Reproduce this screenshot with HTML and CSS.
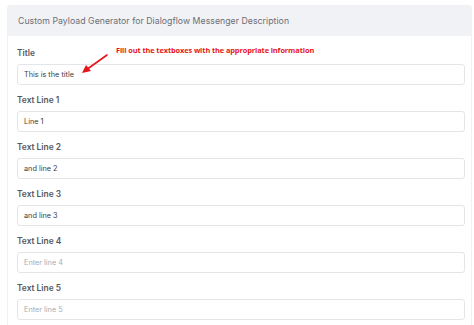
FILE: index.html
```html
<!DOCTYPE html>
<html>
<head>
<meta charset="utf-8">
<link rel="stylesheet" href="styles.css">
</head>
<body>
<div class="card">
  <div class="card-header">Custom Payload Generator for Dialogflow Messenger Description</div>
  <div class="card-body">
    <div class="field">
      <div class="label-row">
        <label class="label">Title</label>
        <span class="note">Fill out the textboxes with the appropriate information</span>
        <svg class="arrow" width="30" height="22" viewBox="0 0 30 22">
          <line x1="27" y1="2" x2="6" y2="17" stroke="#e8141b" stroke-width="1.6" stroke-linecap="round"/>
          <polygon points="2,20 6,12 11,18" fill="#e8141b"/>
        </svg>
      </div>
      <div class="input">This is the title</div>
    </div>
    <div class="field">
      <label class="label">Text Line 1</label>
      <div class="input">Line 1</div>
    </div>
    <div class="field">
      <label class="label">Text Line 2</label>
      <div class="input">and line 2</div>
    </div>
    <div class="field">
      <label class="label">Text Line 3</label>
      <div class="input">and line 3</div>
    </div>
    <div class="field">
      <label class="label">Text Line 4</label>
      <div class="input placeholder">Enter line 4</div>
    </div>
    <div class="field">
      <label class="label">Text Line 5</label>
      <div class="input placeholder">Enter line 5</div>
    </div>
  </div>
</div>
</body>
</html>
```

FILE: styles.css
```css
html, body {
  margin: 0;
  padding: 0;
  background: #fff;
}
html {
  height: 325px;
  overflow: hidden;
}
body {
  font-family: "Inter", "Noto Sans", sans-serif;
  padding: 5px 2px 0 7px;
}
.card {
  border: 1px solid #f0f1f4;
  border-radius: 3px;
  height: 322px;
}
.card-header {
  background: #f1f2f5;
  height: 30px;
  display: flex;
  align-items: center;
  padding-left: 10px;
  font-size: 8.7px;
  color: #6b6e75;
  letter-spacing: 0.05px;
}
.card-body {
  padding: 7px 6px 0 9px;
  display: flex;
  flex-direction: column;
  gap: 5px;
}
.field {
  display: flex;
  flex-direction: column;
}
.label-row {
  display: flex;
  align-items: center;
  position: relative;
  height: 21px;
}
.label {
  font-size: 8.4px;
  font-weight: 600;
  color: #55585e;
  height: 21px;
  line-height: 21px;
  display: block;
}
.note {
  position: absolute;
  left: 99px;
  top: 2px;
  font-family: "Open Sans", sans-serif;
  font-weight: 700;
  font-size: 7.4px;
  color: #e8141b;
  letter-spacing: -0.1px;
}
.arrow {
  position: absolute;
  left: 63px;
  top: 10px;
}
.input {
  height: 21px;
  box-sizing: border-box;
  border: 1px solid #e3e5e9;
  border-radius: 3px;
  display: flex;
  align-items: center;
  padding-left: 6px;
  font-size: 7.3px;
  color: #3b3d42;
}
.placeholder {
  color: #a8abb1;
}
```
